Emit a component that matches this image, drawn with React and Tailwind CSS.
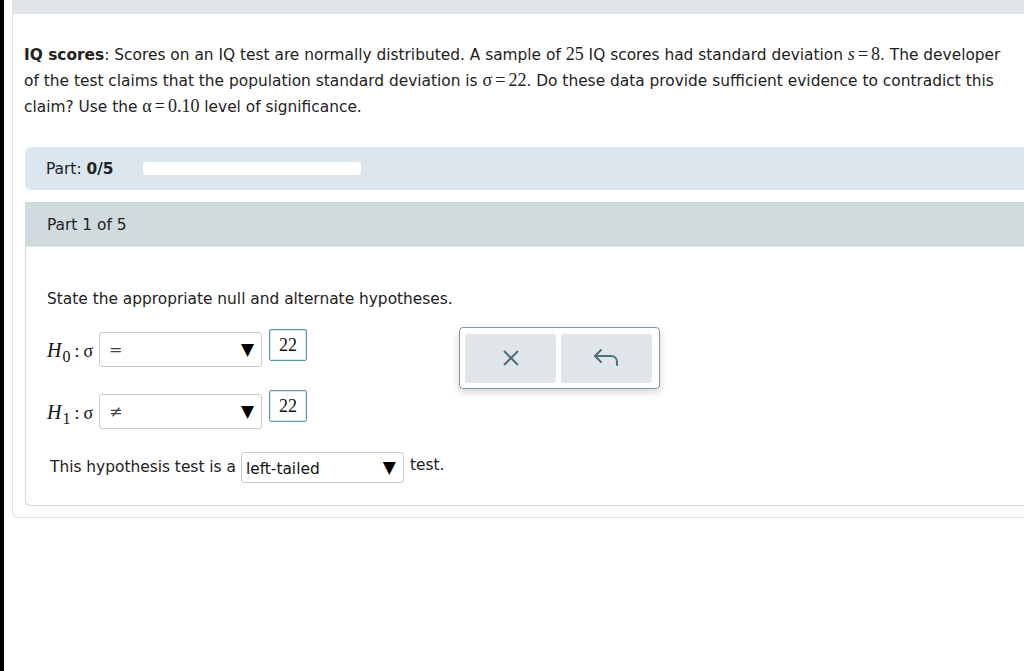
import React from "react";

const sans = { fontFamily: '"DejaVu Sans", Verdana, sans-serif' };
const serif = { fontFamily: '"Liberation Serif", "Times New Roman", serif' };

function M({ children, italic }) {
  return (
    <span className={"text-[18px] leading-none " + (italic ? "italic" : "")} style={serif}>
      {children}
    </span>
  );
}

function Eq({ sym = "=" }) {
  return (
    <span className="text-[18px] leading-none mx-[3px]" style={serif}>
      {sym}
    </span>
  );
}

function Select({ value, w, h, valueClass }) {
  return (
    <div
      className={`flex items-center justify-between border border-[#c9c9c9] rounded-[3px] bg-white pl-[9px] pr-[7px] ${w} ${h}`}
    >
      <span className={valueClass}>{value}</span>
      <span className="text-[17px] leading-none text-black" style={{ fontFamily: '"DejaVu Sans", sans-serif' }}>▼</span>
    </div>
  );
}

function NumBox() {
  return (
    <div
      className="w-[38px] h-[32px] border border-[#5b9aa6] rounded-[2px] flex items-center justify-center text-[18px] text-[#111] shadow-[inset_0_0_0_1px_rgba(91,154,166,0.25)]"
      style={serif}
    >
      22
    </div>
  );
}

function HLabel({ sub }) {
  return (
    <div className="flex items-baseline text-[#111]" style={serif}>
      <span className="italic text-[20px]">H</span>
      <span className="text-[16px] relative top-[5px] ml-[1px]">{sub}</span>
      <span className="text-[18px] ml-[4px]">:</span>
      <span className="text-[18px] ml-[4px]">σ</span>
    </div>
  );
}

export default function App() {
  return (
    <div className="relative w-[1024px] h-[671px] bg-white overflow-hidden flex text-[#222]" style={sans}>
      <div className="w-[4px] shrink-0 bg-black" />
      <div className="w-[1100px] shrink-0 pl-[8px]">
        <div className="h-[14px] bg-[#dfe5e8]" />
        <div className="border-l border-b border-[#dfe4e7] rounded-bl-[6px] pb-[11px]">
          <div className="pl-[11px] pt-[28px] text-[15.4px] leading-[26px] text-[#222] whitespace-nowrap">
            <div className="h-[26px]">
              <b>IQ scores</b>: Scores on an IQ test are normally distributed. A sample of <M>25</M> IQ scores had standard deviation <M italic>s</M><Eq /><M>8</M>. The developer
            </div>
            <div className="h-[26px]">
              of the test claims that the population standard deviation is <M>σ</M><Eq /><M>22</M>. Do these data provide sufficient evidence to contradict this
            </div>
            <div className="h-[26px]">
              claim? Use the <M>α</M><Eq /><M>0.10</M> level of significance.
            </div>
          </div>

          <div className="ml-[12px] mt-[27px] h-[43px] bg-[#dbe6ee] rounded-l-[6px] flex items-center pl-[21px] text-[15.4px]">
            <span className="pt-[3px]">
              Part: <b>0/5</b>
            </span>
            <div className="ml-[29px] w-[218px] h-[13px] bg-white rounded-[3px]" />
          </div>

          <div className="ml-[12px] mt-[12px] border-l border-b border-[#cfd8dc] rounded-bl-[6px]">
            <div className="h-[45px] bg-[#d1dadd] border-b border-[#e6ecee] flex items-center pl-[21px] pt-[4px] text-[15.4px]">
              Part 1 of 5
            </div>
            <div className="relative pl-[21px] pt-[43px] pb-[22px] text-[15.4px]">
              <div className="leading-[18px]">State the appropriate null and alternate hypotheses.</div>

              <div className="mt-[24px] flex items-start">
                <div className="w-[52px] h-[35px] flex items-center">
                  <HLabel sub="0" />
                </div>
                <Select value="=" w="w-[163px]" h="h-[35px]" valueClass="text-[16px] text-[#444]" />
                <div className="ml-[7px] -mt-[3px]">
                  <NumBox />
                </div>
              </div>

              <div className="mt-[27px] flex items-start">
                <div className="w-[52px] h-[35px] flex items-center">
                  <HLabel sub="1" />
                </div>
                <Select value="≠" w="w-[163px]" h="h-[35px]" valueClass="text-[16px] text-[#444]" />
                <div className="ml-[7px] -mt-[4px]">
                  <NumBox />
                </div>
              </div>

              <div className="mt-[23px] flex items-center pl-[3px]">
                <span>This hypothesis test is a</span>
                <div className="ml-[5px]">
                  <Select value="left-tailed" w="w-[163px]" h="h-[31px]" valueClass="text-[15.4px] text-[#111] pt-[4px] -ml-[5px]" />
                </div>
                <span className="ml-[6px] -mt-[3px]">test.</span>
              </div>

              <div className="absolute left-[433px] top-[80px] w-[201px] h-[62px] bg-white border border-[#7e9ba5] rounded-[4px] shadow-[0_3px_8px_rgba(0,0,0,0.18)] flex items-center gap-[5px] px-[5px]">
                <div className="w-[91px] h-[49px] bg-[#dfe5e8] rounded-[3px] flex items-center justify-center">
                  <svg width="18" height="18" viewBox="0 0 18 18" fill="none" stroke="#4c6f7c" strokeWidth="2" strokeLinecap="butt">
                    <path d="M2 2 L16 16 M16 2 L2 16" />
                  </svg>
                </div>
                <div className="w-[91px] h-[49px] bg-[#dfe5e8] rounded-[3px] flex items-center justify-center">
                  <svg width="28" height="20" viewBox="0 0 28 20" fill="none" stroke="#4c6f7c" strokeWidth="2" strokeLinecap="round" strokeLinejoin="round">
                    <path d="M8 2 L2 8 L8 14" />
                    <path d="M2 8 H18 C22 8 24 11 24 14 V17" />
                  </svg>
                </div>
              </div>
            </div>
          </div>
        </div>
      </div>
    </div>
  );
}
